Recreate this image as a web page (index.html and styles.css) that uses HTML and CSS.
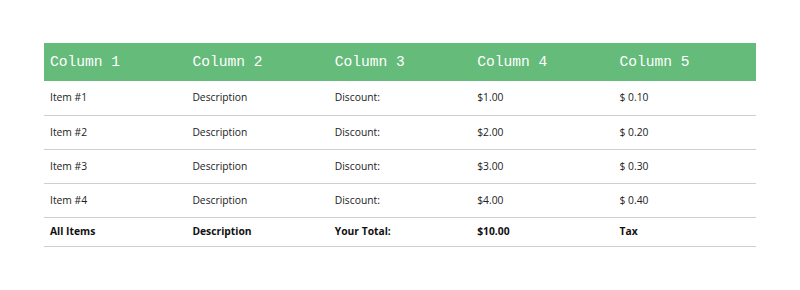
FILE: index.html
```html
<!DOCTYPE html>
<html lang="en">
<head>
  <meta charset="UTF-8">
  <title>Table</title>
  <link rel="stylesheet" href="styles.css">
</head>
<body>
<div class="wrap">
  <table class="price-table">
    <thead>
      <tr>
        <th>Column 1</th>
        <th>Column 2</th>
        <th>Column 3</th>
        <th>Column 4</th>
        <th>Column 5</th>
      </tr>
    </thead>
    <tbody>
      <tr><td>Item #1</td><td>Description</td><td>Discount:</td><td>$1.00</td><td>$ 0.10</td></tr>
      <tr><td>Item #2</td><td>Description</td><td>Discount:</td><td>$2.00</td><td>$ 0.20</td></tr>
      <tr><td>Item #3</td><td>Description</td><td>Discount:</td><td>$3.00</td><td>$ 0.30</td></tr>
      <tr><td>Item #4</td><td>Description</td><td>Discount:</td><td>$4.00</td><td>$ 0.40</td></tr>
    </tbody>
    <tfoot>
      <tr><td>All Items</td><td>Description</td><td>Your Total:</td><td>$10.00</td><td>Tax</td></tr>
    </tfoot>
  </table>
</div>
</body>
</html>
```

FILE: styles.css
```css
* { margin: 0; padding: 0; box-sizing: border-box; }
body {
  font-family: 'Open Sans', sans-serif;
  background: #fff;
  color: #222;
}

.wrap {
  padding: 43px 44px 0;
}

.price-table {
  width: 712px;
  border-collapse: collapse;
  table-layout: fixed;
}

.price-table th {
  background: #64bb7a;
  color: #fff;
  font-family: 'Liberation Mono', monospace;
  font-weight: normal;
  font-size: 14.6px;
  text-align: left;
  height: 38px;
  padding: 0 6px;
}

.price-table td {
  font-size: 10.3px;
  height: 34px;
  padding: 0 6px 1px;
  border-bottom: 1px solid #cfcfcf;
}

.price-table tfoot td {
  font-weight: 700;
  color: #111;
  height: 29px;
}
```
